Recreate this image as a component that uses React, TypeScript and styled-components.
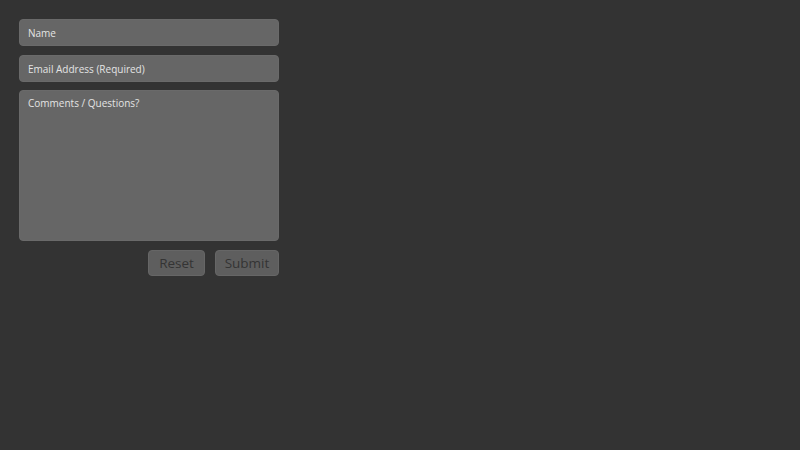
import React from "react";
import styled, { createGlobalStyle } from "styled-components";

const Global = createGlobalStyle`
  html, body { margin: 0; padding: 0; background: #333333; }
  body { font-family: "Open Sans", "Liberation Sans", sans-serif; }
`;

const Page = styled.div`
  width: 800px;
  height: 450px;
  background: #333333;
  padding: 19px;
  box-sizing: border-box;
`;

const Form = styled.form`
  width: 260px;
  display: flex;
  flex-direction: column;
  gap: 9px;
`;

const fieldBase = `
  box-sizing: border-box;
  width: 100%;
  background: #666666;
  border: 1px solid #6a6a6a;
  border-radius: 4px;
  color: #e8e8e8;
  font-family: "Open Sans", "Liberation Sans", sans-serif;
  font-size: 10px;
  padding: 0 8px;
  outline: none;
  margin: 0;
  &::placeholder { color: #e4e4e4; opacity: 1; }
`;

const Input = styled.input`
  ${fieldBase}
  height: 27px;
`;

const TextArea = styled.textarea`
  ${fieldBase}
  height: 151px;
  margin-top: -1px;
  padding-top: 5px;
  resize: none;
  display: block;
`;

const Actions = styled.div`
  display: flex;
  justify-content: flex-end;
  gap: 10px;
`;

const Button = styled.button<{ $w: number }>`
  box-sizing: border-box;
  width: ${(p) => p.$w}px;
  height: 26px;
  background: #5e5e5e;
  border: 1px solid #666666;
  border-radius: 4px;
  color: #343434;
  font-family: "Open Sans", "Liberation Sans", sans-serif;
  font-size: 13.5px;
  padding: 0;
  cursor: pointer;
`;

export default function App() {
  return (
    <Page>
      <Global />
      <Form onSubmit={(e) => e.preventDefault()}>
        <Input placeholder="Name" />
        <Input placeholder="Email Address (Required)" />
        <TextArea placeholder="Comments / Questions?" />
        <Actions>
          <Button type="reset" $w={57}>Reset</Button>
          <Button type="submit" $w={64}>Submit</Button>
        </Actions>
      </Form>
    </Page>
  );
}
